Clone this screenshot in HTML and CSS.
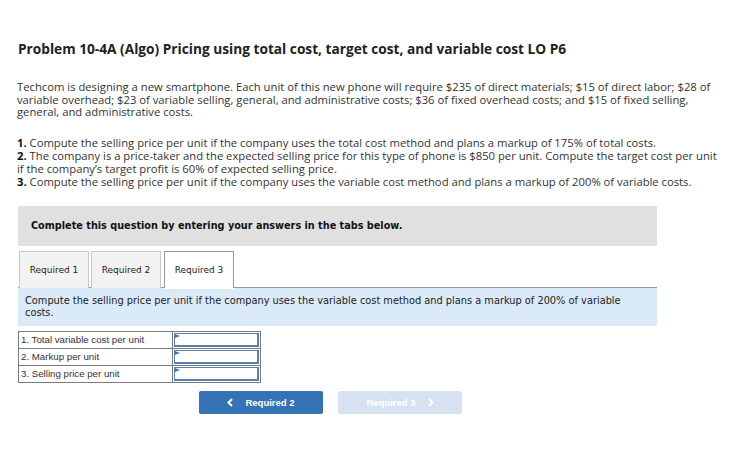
FILE: index.html
```html
<!DOCTYPE html>
<html>
<head>
<meta charset="utf-8">
<link rel="stylesheet" href="styles.css">
</head>
<body>
<div class="page">
  <h1 class="title">Problem 10-4A (Algo) Pricing using total cost, target cost, and variable cost LO P6</h1>
  <p class="intro">Techcom is designing a new smartphone. Each unit of this new phone will require $235 of direct materials; $15 of direct labor; $28 of variable overhead; $23 of variable selling, general, and administrative costs; $36 of fixed overhead costs; and $15 of fixed selling, general, and administrative costs.</p>
  <div class="reqs">
    <div><b>1.</b> Compute the selling price per unit if the company uses the total cost method and plans a markup of 175% of total costs.</div>
    <div><b>2.</b> The company is a price-taker and the expected selling price for this type of phone is $850 per unit. Compute the target cost per unit if the company’s target profit is 60% of expected selling price.</div>
    <div><b>3.</b> Compute the selling price per unit if the company uses the variable cost method and plans a markup of 200% of variable costs.</div>
  </div>
  <div class="panel">
    <div class="banner">Complete this question by entering your answers in the tabs below.</div>
    <div class="tabs">
      <div class="tab">Required 1</div>
      <div class="tab">Required 2</div>
      <div class="tab active">Required 3</div>
    </div>
    <div class="prompt">Compute the selling price per unit if the company uses the variable cost method and plans a markup of 200% of variable costs.</div>
    <table class="grid">
      <tr><td class="lbl">1. Total variable cost per unit</td><td class="inp"><span class="cell"></span></td></tr>
      <tr><td class="lbl">2. Markup per unit</td><td class="inp"><span class="cell"></span></td></tr>
      <tr><td class="lbl">3. Selling price per unit</td><td class="inp"><span class="cell"></span></td></tr>
    </table>
    <div class="nav">
      <div class="btn prev"><svg class="chev" width="6" height="9" viewBox="0 0 6 9"><polyline points="5,1 1.5,4.5 5,8" fill="none" stroke="#fff" stroke-width="2"/></svg>Required 2</div>
      <div class="btn next">Required 3<svg class="chev" width="6" height="9" viewBox="0 0 6 9"><polyline points="1,1 4.5,4.5 1,8" fill="none" stroke="#fff" stroke-width="2"/></svg></div>
    </div>
  </div>
</div>
</body>
</html>
```
FILE: styles.css
```css
* { box-sizing: border-box; }
body {
  margin: 0;
  background: #fff;
  font-family: "Open Sans", "Lato", sans-serif;
  color: #333;
}
.page {
  padding: 40px 33px 0 17px;
  width: 755px;
}
.title {
  margin: 0 0 0 1px;
  font-size: 13.7px;
  font-weight: 700;
  color: #222;
  line-height: 18px;
}
.intro {
  margin: 23px 0 0 0;
  font-size: 11.25px;
  line-height: 12.5px;
}
.reqs {
  margin-top: 17px;
  font-size: 11.25px;
  line-height: 13.3px;
}
.reqs b { color: #111; }
.panel {
  margin-top: 17px;
  width: 639px;
  margin-left: 1px;
}
.banner {
  background: #e0e0e0;
  height: 40px;
  display: flex;
  align-items: center;
  padding-left: 13px;
  font-family: "DejaVu Sans", Verdana, sans-serif;
  font-weight: 700;
  font-size: 9.7px;
  color: #111;
}
.tabs {
  display: flex;
  gap: 2px;
  margin-top: 5px;
  padding-left: 1px;
  border-bottom: 1px solid #999;
  height: 37px;
}
.tab {
  width: 70px;
  height: 37px;
  display: flex;
  align-items: center;
  justify-content: center;
  background: #f2f2f2;
  border: 1px solid #c8c8c8;
  border-bottom: none;
  font-family: "DejaVu Sans", Verdana, sans-serif;
  font-size: 9px;
  color: #222;
}
.tab.active {
  background: #fff;
  border-color: #999;
  height: 37px;
  margin-left: 1px;
  box-shadow: 0 1px 0 #fff;
}
.prompt {
  background: #daeaf8;
  padding: 7px 13px 7px 7px;
  height: 38px;
  font-family: "DejaVu Sans", Verdana, sans-serif;
  font-size: 9.8px;
  line-height: 12px;
  color: #222;
}
.grid {
  margin-top: 5px;
  border-collapse: collapse;
  font-family: "Liberation Sans", Arial, sans-serif;
  font-size: 9.7px;
  color: #333;
}
.grid td {
  border: 1px solid #7a7a7a;
  height: 17px;
  padding: 0;
}
.lbl {
  width: 154px;
  padding-left: 2px !important;
}
.inp {
  width: 88px;
  padding: 1px !important;
  vertical-align: top;
}
.cell {
  display: block;
  height: 14px;
  border: 1px solid #5a7fae;
  border-width: 1px 2px 2px 1px;
  position: relative;
}
.cell::before {
  content: "";
  position: absolute;
  left: 0;
  top: 0;
  border-left: 5px solid #3f76c2;
  border-top: 2px solid transparent;
  border-bottom: 2px solid transparent;
}
.nav {
  display: flex;
  gap: 15px;
  margin-top: 8px;
  padding-left: 181px;
}
.btn {
  width: 124px;
  height: 23px;
  border-radius: 2px;
  display: flex;
  align-items: center;
  justify-content: center;
  font-family: "Liberation Sans", Arial, sans-serif;
  font-weight: 700;
  font-size: 9.5px;
  color: #fff;
}
.btn.prev { background: #3573b7; }
.btn.next { background: #d6e2f1; }
.chev { margin-right: 12px; }
.next .chev { margin: 0 0 0 12px; }
```
